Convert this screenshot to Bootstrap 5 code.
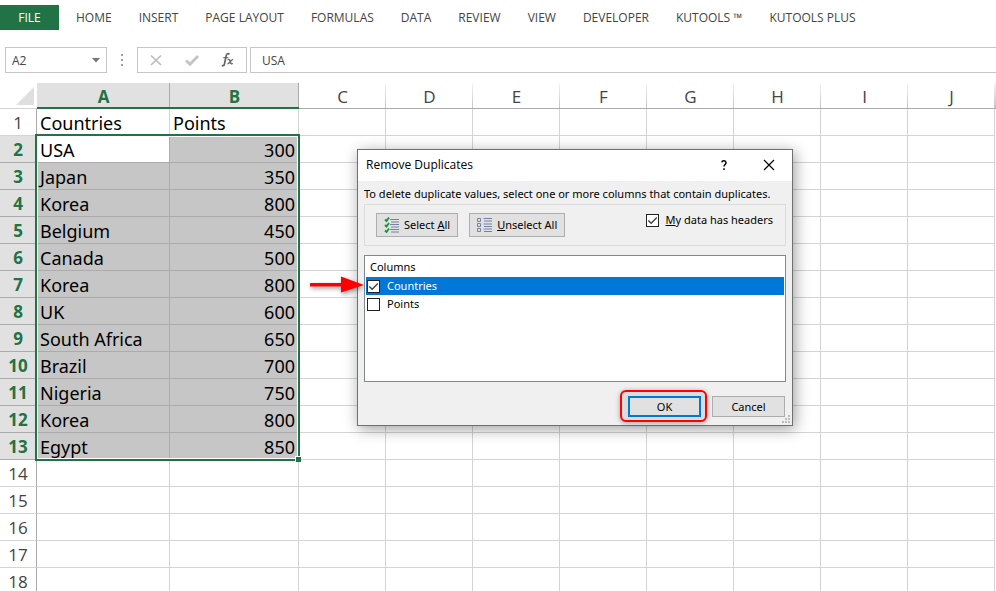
<!DOCTYPE html>
<html lang="en">
<head>
<meta charset="utf-8">
<meta name="viewport" content="width=device-width, initial-scale=1">
<title>Spreadsheet - Remove Duplicates</title>
<link href="https://cdn.jsdelivr.net/npm/bootstrap@5.3.0/dist/css/bootstrap.min.css" rel="stylesheet">
<style>
:root{--xl-green:#217346;--grid:#d4d4d4;--axis:#ababab;}
body{font-family:"Noto Sans","Open Sans",sans-serif;background:#fff;color:#000;overflow:hidden;min-height:100vh}
.ribbon{padding-top:5px;gap:27px;font-size:12px;line-height:25px;font-family:"Open Sans","Noto Sans",sans-serif}
.ribbon a{color:#444;text-decoration:none;white-space:nowrap}
.ribbon .file-tab{background:var(--xl-green);color:#fff;width:59px;text-align:center;margin-right:-10px}
.formula-row{margin-top:17px;padding-left:5px;font-size:13px;color:#444;height:26px}
.fbox{border:1px solid #c6c6c6;background:#fff;height:26px}
.fbox input{border:0;outline:0;background:transparent;color:#444;font-family:"Open Sans","Noto Sans",sans-serif;font-size:12px;line-height:20px;padding:2px 0 0;min-width:0}
.name-box{width:102px;padding:0 6px}
.name-box button,.fx-tools button,.win-btn{border:0;background:transparent;padding:0;line-height:0}
.dots{width:30px}
.fx-tools{width:110px;padding:0 9px}
.formula-input{margin-left:3px;padding-left:11px;border-right:0!important}
.sheet{margin-top:10px}
.grid{width:100%;table-layout:fixed;border-collapse:separate;border-spacing:0}
.grid th,.grid td{height:27px;padding:2px 3px 0;border-right:1px solid var(--grid);border-bottom:1px solid var(--grid);white-space:nowrap;overflow:hidden;font-size:18px;line-height:24px}
.grid th{font-size:17px;font-weight:400;color:#444;text-align:center;font-family:"Open Sans","Noto Sans",sans-serif}
.grid thead th{height:26px;line-height:23px;border-bottom:1px solid var(--axis);border-right:0;background:linear-gradient(#f4f4f4,#c4c4c4) right/1px 100% no-repeat}
.grid thead .picked{background:linear-gradient(var(--axis),var(--axis)) right/1px 100% no-repeat,#e1e1e1;color:var(--xl-green);font-weight:700;border-bottom:2px solid var(--xl-green);padding-top:4px;line-height:20px}
.grid thead .corner{background:none;border-bottom-color:#d4d4d4;padding:3px 3px 3px 0;line-height:0;text-align:right}
.grid tbody th{border-right-color:var(--axis);padding:2px 1px 0}
.grid .in-range th{background:#e1e1e1;color:var(--xl-green);font-weight:700;border-bottom-color:var(--axis)}
.grid .in-range td:nth-child(2),.grid .in-range td:nth-child(3){background:#c6c6c6;border-color:var(--axis)}
.grid .in-range td.active-cell{background:#fff}
.grid td:nth-child(3){text-align:right}
.grid .title-row td:nth-child(3){text-align:left}
.col-num{width:37px}.col-a{width:133px}.col-b{width:129px}.col-x{width:87px}
.selection{position:absolute;left:35px;top:51px;width:265px;height:327px;border:2px solid var(--xl-green);box-shadow:inset 0 0 0 1px #fff;pointer-events:none}
.selection::after{content:"";position:absolute;right:-3px;bottom:-3px;width:6px;height:6px;background:var(--xl-green);border-top:1px solid #fff;border-left:1px solid #fff;box-sizing:border-box}
.pointer{position:absolute;left:306px;top:188px;z-index:3}
.dup-dialog{position:absolute;left:357px;top:66px;width:436px;background:#f0f0f0;border:1px solid #707070;box-shadow:2px 3px 14px rgba(0,0,0,.38);font-size:11px;line-height:16px;z-index:2;color:#000}
.dlg-title{background:#fff;height:31px;padding:0 16px 2px 8px;font-family:"Open Sans","Noto Sans",sans-serif;font-size:12px}
.dlg-body{padding:5px 6px 3px 6px}
.opts{border:1px solid #dcdcdc;height:42px;margin-top:2px;padding:0 12px 0 11px}
.dlg-btn{border:1px solid #adadad;background:#e1e1e1;color:#000;border-radius:0;font-size:11px;line-height:16px;padding:0 7px;height:24px;white-space:nowrap}
.opts .dlg-btn + .dlg-btn{margin-left:11px}
.opts label{gap:7px;margin-bottom:10px}
.chk{appearance:none;width:13px;height:13px;border:1px solid #222;background:#fff;margin:0;flex:none}
.chk:checked{background:#fff url("data:image/svg+xml,%3Csvg xmlns='http://www.w3.org/2000/svg' viewBox='0 0 11 11'%3E%3Cpath d='M1.3 5.4 4.2 8.3 9.8 2.5' fill='none' stroke='%23444' stroke-width='1.4'/%3E%3C/svg%3E") center/11px 11px no-repeat}
.col-list{border:1px solid #828790;background:#fff;margin-top:9px;height:127px;padding:2px 1px}
.col-list .head{padding-left:4px;padding-bottom:1px;line-height:18px}
.col-list label{line-height:18px;padding-left:1px;gap:7px}
.col-list .sel{background:#0078d7;color:#fff}
.dlg-foot{margin-top:8px;gap:5px;padding-right:1px}
.dlg-foot .dlg-btn{width:73px;height:21px;line-height:17px}
.ring{border:2px solid #f00;border-radius:6px;padding:4px 4px 3px 6px;box-shadow:0 1px 5px rgba(0,0,0,.35);background:#dcdcdc;line-height:0}
.ring .dlg-btn{border:2px solid #0078d7}
.grip{position:absolute;right:2px;bottom:2px}
</style>
<script src="https://cdn.jsdelivr.net/npm/bootstrap@5.3.0/dist/js/bootstrap.bundle.min.js"></script>
</head>
<body>
<nav class="ribbon d-flex" aria-label="Ribbon">
<a class="file-tab" href="#">FILE</a><a href="#">HOME</a><a href="#">INSERT</a><a href="#">PAGE LAYOUT</a><a href="#">FORMULAS</a><a href="#">DATA</a><a href="#">REVIEW</a><a href="#">VIEW</a><a href="#">DEVELOPER</a><a href="#">KUTOOLS ™</a><a href="#">KUTOOLS PLUS</a>
</nav>
<div class="formula-row d-flex">
  <div class="fbox name-box d-flex align-items-center justify-content-between">
    <input class="w-50" type="text" value="A2" aria-label="Name box">
    <button type="button" aria-label="Show names"><svg width="8" height="5"><path d="M0 0h8L4 4.500z" fill="#777"/></svg></button>
  </div>
  <div class="dots d-flex align-items-center justify-content-center"><svg width="2" height="12" fill="#a0a0a0"><path d="M0 0h2v2H0zM0 5h2v2H0zM0 10h2v2H0z"/></svg></div>
  <div class="fbox fx-tools d-flex align-items-center justify-content-between">
    <button type="button" aria-label="Cancel entry"><svg width="18" height="14"><path d="M4 2.500l10 9.500M14 2.500L4 12" stroke="#bdbdbd" stroke-width="1.700" fill="none"/></svg></button>
    <button type="button" aria-label="Enter"><svg width="18" height="14"><path d="M3 7.500l4 3.800L15 3" stroke="#c4c4c4" stroke-width="2.800" fill="none"/></svg></button>
    <button type="button" aria-label="Insert function"><svg width="18" height="16" fill="none" stroke="#666"><path d="M10.500 2.300C8.500.8 7.400 2 7 4.300L5.600 11.500C5.200 13.700 4.200 14.200 2.900 13.300" stroke-width="1.700"/><path d="M4.300 5.600h5" stroke-width="1.200"/><path d="M8.600 7.600c2.200-.9 2.300 1 2.700 2.400.4 1.600 1 2.400 2.700 1.500M14.200 7.400c-2.500.2-3.500 4.500-5.800 4.500" stroke-width="1.400"/></svg></button>
  </div>
  <div class="fbox formula-input flex-grow-1 d-flex align-items-center"><input class="w-100" type="text" value="USA" aria-label="Formula bar"></div>
</div>
<main class="sheet position-relative">
<table class="grid">
<colgroup><col class="col-num"><col class="col-a"><col class="col-b"><col class="col-x"><col class="col-x"><col class="col-x"><col class="col-x"><col class="col-x"><col class="col-x"><col class="col-x"><col class="col-x"><col></colgroup>
<thead><tr><th class="corner"><svg width="18" height="18"><path d="M18 0v18H0z" fill="#dfdfdf"/></svg></th><th class="picked">A</th><th class="picked">B</th><th>C</th><th>D</th><th>E</th><th>F</th><th>G</th><th>H</th><th>I</th><th>J</th><th class="p-0 bg-white"></th></tr></thead>
<tbody>
<tr class="title-row"><th>1</th><td>Countries</td><td>Points</td><td></td><td></td><td></td><td></td><td></td><td></td><td></td><td></td></tr>
<tr class="in-range"><th>2</th><td class="active-cell">USA</td><td>300</td><td></td><td></td><td></td><td></td><td></td><td></td><td></td><td></td></tr>
<tr class="in-range"><th>3</th><td>Japan</td><td>350</td><td></td><td></td><td></td><td></td><td></td><td></td><td></td><td></td></tr>
<tr class="in-range"><th>4</th><td>Korea</td><td>800</td><td></td><td></td><td></td><td></td><td></td><td></td><td></td><td></td></tr>
<tr class="in-range"><th>5</th><td>Belgium</td><td>450</td><td></td><td></td><td></td><td></td><td></td><td></td><td></td><td></td></tr>
<tr class="in-range"><th>6</th><td>Canada</td><td>500</td><td></td><td></td><td></td><td></td><td></td><td></td><td></td><td></td></tr>
<tr class="in-range"><th>7</th><td>Korea</td><td>800</td><td></td><td></td><td></td><td></td><td></td><td></td><td></td><td></td></tr>
<tr class="in-range"><th>8</th><td>UK</td><td>600</td><td></td><td></td><td></td><td></td><td></td><td></td><td></td><td></td></tr>
<tr class="in-range"><th>9</th><td>South Africa</td><td>650</td><td></td><td></td><td></td><td></td><td></td><td></td><td></td><td></td></tr>
<tr class="in-range"><th>10</th><td>Brazil</td><td>700</td><td></td><td></td><td></td><td></td><td></td><td></td><td></td><td></td></tr>
<tr class="in-range"><th>11</th><td>Nigeria</td><td>750</td><td></td><td></td><td></td><td></td><td></td><td></td><td></td><td></td></tr>
<tr class="in-range"><th>12</th><td>Korea</td><td>800</td><td></td><td></td><td></td><td></td><td></td><td></td><td></td><td></td></tr>
<tr class="in-range"><th>13</th><td>Egypt</td><td>850</td><td></td><td></td><td></td><td></td><td></td><td></td><td></td><td></td></tr>
<tr><th>14</th><td></td><td></td><td></td><td></td><td></td><td></td><td></td><td></td><td></td><td></td></tr>
<tr><th>15</th><td></td><td></td><td></td><td></td><td></td><td></td><td></td><td></td><td></td><td></td></tr>
<tr><th>16</th><td></td><td></td><td></td><td></td><td></td><td></td><td></td><td></td><td></td><td></td></tr>
<tr><th>17</th><td></td><td></td><td></td><td></td><td></td><td></td><td></td><td></td><td></td><td></td></tr>
<tr><th>18</th><td></td><td></td><td></td><td></td><td></td><td></td><td></td><td></td><td></td><td></td></tr>
</tbody>
</table>
<div class="selection"></div>
<section class="dup-dialog" role="dialog" aria-labelledby="dlgTitle">
  <div class="dlg-title d-flex align-items-center">
    <span id="dlgTitle" class="me-auto">Remove Duplicates</span>
    <button class="win-btn me-4" type="button" aria-label="Help"><svg width="18" height="14"><path d="M5.800 4.300C6 2.500 10 2 10 4.700 10 6.500 8 6.400 8 8.500M8 10.200v1.800" fill="none" stroke="#000" stroke-width="1.500"/></svg></button>
    <button class="win-btn ms-1" type="button" aria-label="Close"><svg width="14" height="14"><path d="M2 2l10 10M12 2L2 12" stroke="#000" stroke-width="1.200"/></svg></button>
  </div>
  <div class="dlg-body">
    <div>To delete duplicate values, select one or more columns that contain duplicates.</div>
    <div class="opts d-flex align-items-center">
      <button class="dlg-btn d-flex align-items-center gap-1" type="button"><svg width="16" height="16" fill="none"><path d="M6 2.500h9M7 5h8M6 7.500h9M7 10h8M6 12.500h9M7 15h8" stroke="#7382a6"/><path d="M1 2.500l1.500 1.500L5 .5M1 8l1.500 1.500L5 6M1 13.500l1.500 1.500L5 11.500" stroke="#16913a" stroke-width="1.800"/></svg><span>Select <u>A</u>ll</span></button>
      <button class="dlg-btn d-flex align-items-center gap-1" type="button"><svg width="16" height="16" fill="none"><path d="M6.500 1.500H15M7 4h8M6.500 7H15M7 9.500h8M6.500 12H15M7 14.500h8M.5 1.500h3v3h-3zM.5 6.500h3v3h-3zM.5 11.500h3v3h-3z" stroke="#7382a6"/></svg><span><u>U</u>nselect All</span></button>
      <label class="d-flex align-items-center ms-auto"><input class="chk" type="checkbox" checked><span><u>M</u>y data has headers</span></label>
    </div>
    <div class="col-list">
      <div class="head">Columns</div>
      <label class="sel d-flex align-items-center"><input class="chk" type="checkbox" checked>Countries</label>
      <label class="d-flex align-items-center"><input class="chk" type="checkbox">Points</label>
    </div>
    <div class="dlg-foot d-flex justify-content-end align-items-center">
      <div class="ring"><button class="dlg-btn" type="button">OK</button></div>
      <button class="dlg-btn" type="button">Cancel</button>
    </div>
  </div>
  <svg class="grip" width="8" height="8" fill="#bdbdbd"><path d="M6 0h2v2H6zM3 3h2v2H3zM6 3h2v2H6zM0 6h2v2H0zM3 6h2v2H3zM6 6h2v2H6z"/></svg>
</section>
<svg class="pointer" width="62" height="28"><path d="M4 12h31V5.500L58 14 35 21.500V15.500H4z" fill="#f00" style="filter:drop-shadow(1px 2px 2px rgba(0,0,0,.4))"/></svg>
</main>
</body>
</html>
